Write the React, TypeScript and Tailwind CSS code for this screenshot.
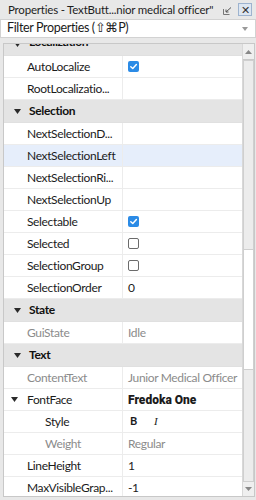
import React from 'react';

type Row =
  | { kind: 'header'; label: string }
  | {
      kind: 'prop';
      name: string;
      value?: React.ReactNode;
      muted?: boolean;
      indent?: boolean;
      expand?: boolean;
      active?: boolean;
    };

const Check: React.FC<{ on?: boolean }> = ({ on }) =>
  on ? (
    <span className="flex h-[11px] w-[11px] items-center justify-center rounded-[2px] bg-[#2b8be6]">
      <svg width="9" height="9" viewBox="0 0 10 10">
        <path d="M2 5.2 L4.2 7.3 L8.2 2.8" fill="none" stroke="#fff" strokeWidth="1.6" strokeLinecap="round" strokeLinejoin="round" />
      </svg>
    </span>
  ) : (
    <span className="h-[11px] w-[11px] rounded-[2px] border border-[#6b6b6b] bg-white" />
  );

const Caret = () => (
  <svg width="7" height="5" viewBox="0 0 7 5">
    <path d="M0 0 H7 L3.5 5 Z" fill="#2a2a2a" />
  </svg>
);

const rows: Row[] = [
  { kind: 'prop', name: 'AutoLocalize', value: <Check on /> },
  { kind: 'prop', name: 'RootLocalizatio...' },
  { kind: 'header', label: 'Selection' },
  { kind: 'prop', name: 'NextSelectionD...' },
  { kind: 'prop', name: 'NextSelectionLeft', active: true },
  { kind: 'prop', name: 'NextSelectionRi...' },
  { kind: 'prop', name: 'NextSelectionUp' },
  { kind: 'prop', name: 'Selectable', value: <Check on /> },
  { kind: 'prop', name: 'Selected', value: <Check /> },
  { kind: 'prop', name: 'SelectionGroup', value: <Check /> },
  { kind: 'prop', name: 'SelectionOrder', value: '0' },
  { kind: 'header', label: 'State' },
  { kind: 'prop', name: 'GuiState', value: 'Idle', muted: true },
  { kind: 'header', label: 'Text' },
  { kind: 'prop', name: 'ContentText', value: 'Junior Medical Officer', muted: true },
  {
    kind: 'prop',
    name: 'FontFace',
    expand: true,
    value: <span className="font-['Roboto'] font-black tracking-[0px]">Fredoka One</span>,
  },
  {
    kind: 'prop',
    name: 'Style',
    indent: true,
    value: (
      <span className="flex items-center gap-[17px] pl-[2px]">
        <span className="font-bold text-[11px]">B</span>
        <span className="font-['Liberation_Serif'] italic text-[11px]">I</span>
      </span>
    ),
  },
  { kind: 'prop', name: 'Weight', indent: true, muted: true, value: 'Regular' },
  { kind: 'prop', name: 'LineHeight', value: '1' },
  { kind: 'prop', name: 'MaxVisibleGrap...', value: '-1' },
];

const HeaderRow: React.FC<{ label: string; className?: string; lift?: boolean }> = ({ label, className, lift }) => (
  <div className={`flex h-[23px] shrink-0 items-center border-b border-[#e0e0e0] bg-[#e4e4e4] ${className ?? ''}`}>
    <span className="flex w-[25px] justify-center pl-[2px]">
      <Caret />
    </span>
    <span className={`font-bold text-[#111] ${lift ? '-mt-[4px]' : ''}`}>{label}</span>
  </div>
);

const PropRow: React.FC<{ row: Extract<Row, { kind: 'prop' }> }> = ({ row }) => (
  <div
    className={`flex h-[22px] shrink-0 border-b border-[#ececec] ${row.active ? 'bg-[#e6eefb]' : 'bg-white'}`}
  >
    <div
      className={`flex w-[119px] items-center border-r border-[#ececec] ${row.indent ? 'pl-[41px]' : 'pl-[23px]'} ${
        row.muted ? 'text-[#8b8b8b]' : 'text-[#1b1b1b]'
      }`}
    >
      {row.expand && (
        <span className="-ml-[16px] mr-[9px] flex">
          <Caret />
        </span>
      )}
      <span className="whitespace-nowrap">{row.name}</span>
    </div>
    <div
      className={`flex flex-1 items-center pl-[5px] whitespace-nowrap ${row.muted ? 'text-[#8b8b8b]' : 'text-[#1b1b1b]'}`}
    >
      {row.value}
    </div>
  </div>
);

export default function App() {
  return (
    <div className="flex h-[500px] w-[256px] flex-col overflow-hidden bg-[#e8e8e8] font-['Lato',sans-serif] text-[12px] tracking-[-0.35px]">
      <div className="flex h-[19px] shrink-0 items-center pl-[8px] pr-[4px] text-[#1e1e1e]">
        <span className="flex-1 whitespace-nowrap text-[11.5px] tracking-[-0.2px]">Properties - TextButt...nior medical officer"</span>
        <svg width="9" height="8" viewBox="0 0 9 8" className="mr-[6px] mt-[3px]">
          <path d="M0.5 2 V7.5 H6.5" fill="none" stroke="#777" strokeWidth="1" />
          <path d="M3 5 L8 0.5 M3 5 V2.5 M3 5 H5.5" fill="none" stroke="#555" strokeWidth="1" />
        </svg>
        <span className="flex h-[13px] w-[14px] items-center justify-center border border-[#9db3cf] bg-[#dde6f1] text-[11px] leading-none tracking-normal text-[#333]">
          ✕
        </span>
      </div>

      <div className="flex h-[19px] shrink-0 items-center border border-[#d2d2d2] bg-white pl-[6px] pr-[7px] text-[12.5px] text-[#1b1b1b]">
        <span className="flex-1 whitespace-nowrap">Filter Properties (⇧⌘P)</span>
        <svg width="6" height="4" viewBox="0 0 6 4">
          <path d="M0 0 H6 L3 4 Z" fill="#9a9a9a" />
        </svg>
      </div>

      <div className="mt-[5px] ml-[3px] mr-[1px] flex h-[454px] shrink-0 border border-[#c8c8c8] bg-white">
        <div className="flex flex-1 flex-col overflow-hidden">
          <HeaderRow label="Localization" className="-mt-[11px]" lift />
          {rows.map((r, i) =>
            r.kind === 'header' ? <HeaderRow key={i} label={r.label} /> : <PropRow key={i} row={r} />
          )}
        </div>

        <div className="flex w-[12px] flex-col border-l border-[#d8d8d8] bg-[#e8e8e8]">
          <div className="flex h-[16px] items-center justify-center border-b border-[#c9c9c9] bg-[#efefef]">
            <svg width="7" height="4" viewBox="0 0 7 4">
              <path d="M0 4 H7 L3.5 0 Z" fill="#888" />
            </svg>
          </div>
          <div className="h-[190px] border border-[#cfcfcf] bg-[#ececec]" />
          <div className="h-[119px] border-x border-[#cfcfcf] bg-white" />
          <div className="flex-1 border border-[#cfcfcf] bg-[#ececec]" />
          <div className="flex h-[14px] items-center justify-center bg-[#efefef]">
            <svg width="7" height="4" viewBox="0 0 7 4">
              <path d="M0 0 H7 L3.5 4 Z" fill="#888" />
            </svg>
          </div>
        </div>
      </div>
    </div>
  );
}
